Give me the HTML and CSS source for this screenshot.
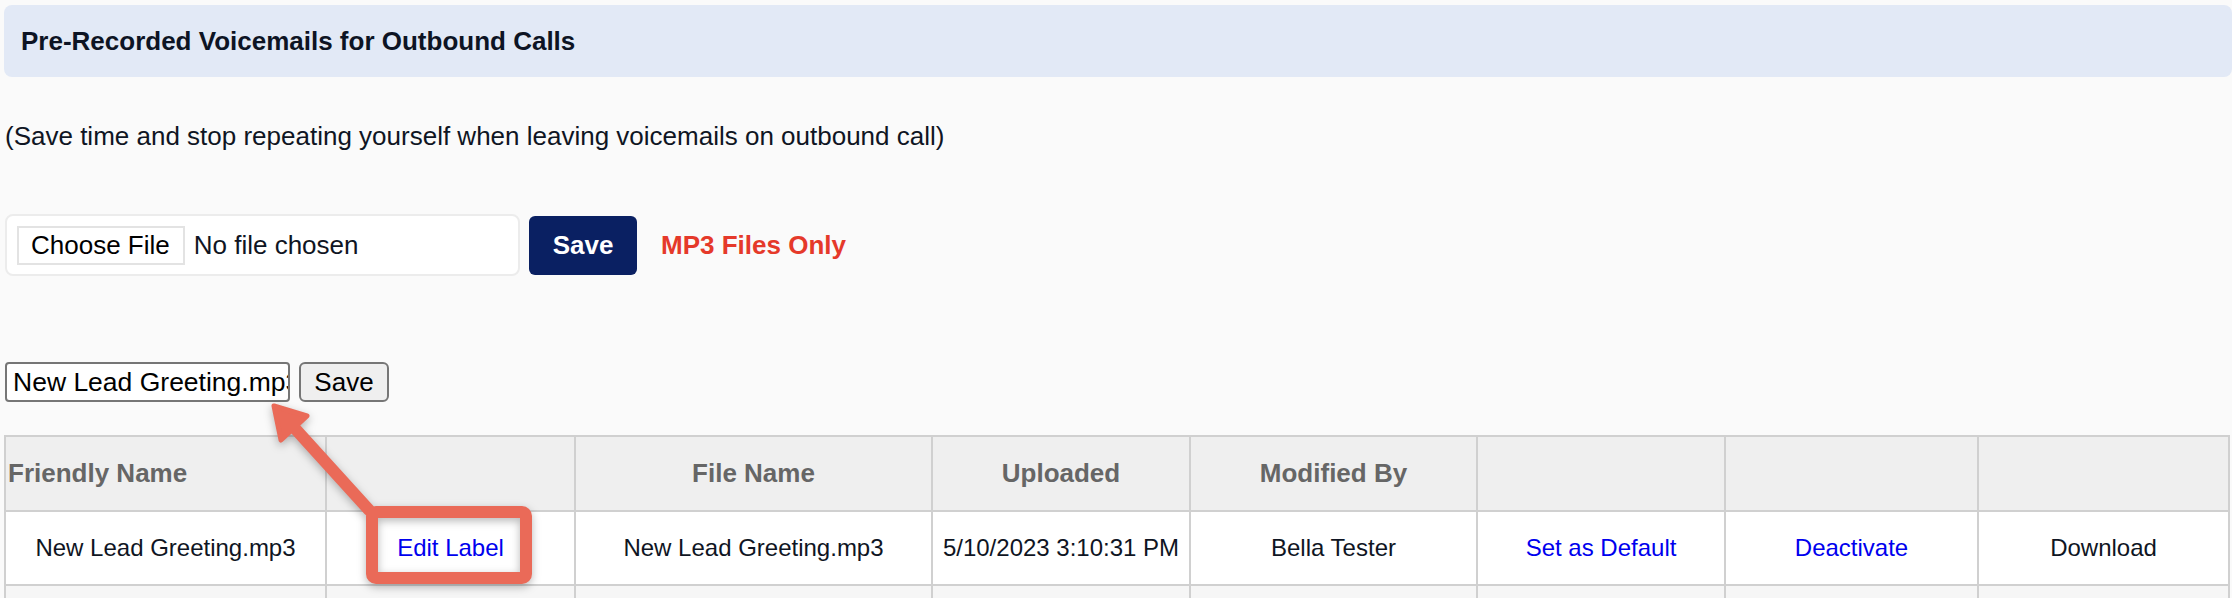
FILE: index.html
```html
<!DOCTYPE html>
<html lang="en">
<head>
<meta charset="utf-8">
<title>Pre-Recorded Voicemails</title>
<link rel="stylesheet" href="styles.css">
</head>
<body>
<div class="page">
  <div class="band">
    <h1 class="band-title">Pre-Recorded Voicemails for Outbound Calls</h1>
  </div>
  <p class="intro">(Save time and stop repeating yourself when leaving voicemails on outbound call)</p>

  <div class="upload-row">
    <label class="file-box">
      <span class="file-btn">Choose File</span>
      <span class="file-name">No file chosen</span>
    </label>
    <button class="btn-primary" type="button">Save</button>
    <span class="mp3-note">MP3 Files Only</span>
  </div>

  <div class="label-row">
    <input class="label-input" type="text" value="New Lead Greeting.mp3">
    <button class="btn-plain" type="button">Save</button>
  </div>

  <table class="grid">
    <colgroup>
      <col class="w1"><col class="w2"><col class="w3"><col class="w4">
      <col class="w5"><col class="w6"><col class="w7"><col class="w8">
    </colgroup>
    <thead>
      <tr class="head-row">
        <th class="th-left">Friendly Name</th>
        <th></th>
        <th>File Name</th>
        <th>Uploaded</th>
        <th>Modified By</th>
        <th></th>
        <th></th>
        <th></th>
      </tr>
    </thead>
    <tbody>
      <tr class="body-row">
        <td>New Lead Greeting.mp3</td>
        <td><a class="link" href="#">Edit Label</a></td>
        <td>New Lead Greeting.mp3</td>
        <td>5/10/2023 3:10:31 PM</td>
        <td>Bella Tester</td>
        <td><a class="link" href="#">Set as Default</a></td>
        <td><a class="link" href="#">Deactivate</a></td>
        <td>Download</td>
      </tr>
      <tr class="body-row stripe">
        <td>&nbsp;</td><td></td><td></td><td></td><td></td><td></td><td></td><td></td>
      </tr>
    </tbody>
  </table>
</div>

<svg class="annot" width="2232" height="598" viewBox="0 0 2232 598" aria-hidden="true">
  <g class="annot-shadow">
    <line x1="369" y1="510" x2="290" y2="423" stroke="#ea6a58" stroke-width="12" stroke-linecap="round"/>
    <polygon points="274,406 307,416 281,440" fill="#ea6a58" stroke="#ea6a58" stroke-width="5" stroke-linejoin="round"/>
    <rect x="372" y="512" width="154" height="66" rx="4" ry="4" fill="none" stroke="#ea6a58" stroke-width="12"/>
  </g>
</svg>
</body>
</html>
```

FILE: styles.css
```css
html, body {
  margin: 0;
  padding: 0;
  height: 598px;
  overflow: hidden;
  background: #fafafa;
}

body {
  position: relative;
  font-family: "Liberation Sans", Arial, Helvetica, sans-serif;
  font-size: 26px;
  color: #0f1523;
}

.page {
  padding: 5px 0 0 4px;
}

.band {
  height: 72px;
  background: #e2e9f6;
  border-radius: 8px;
  display: flex;
  align-items: center;
  padding-left: 17px;
}

.band-title {
  margin: 0;
  font-size: 26px;
  font-weight: bold;
  color: #0d1424;
}

.intro {
  margin: 44px 0 0 1px;
  line-height: 30px;
  font-size: 26px;
  color: #0f1523;
}

.upload-row {
  margin-top: 63px;
  display: flex;
  align-items: center;
  padding-left: 1px;
}

.file-box {
  width: 515px;
  height: 62px;
  box-sizing: border-box;
  border: 2px solid #ececec;
  border-radius: 8px;
  background: #ffffff;
  display: flex;
  align-items: center;
  padding-left: 10px;
  gap: 9px;
}

.file-btn {
  display: inline-block;
  height: 39px;
  box-sizing: border-box;
  line-height: 35px;
  padding: 0 13px 0 12px;
  border: 2px solid #e3e3e3;
  background: #ffffff;
  color: #000000;
}

.file-name {
  color: #0f1523;
}

.btn-primary {
  margin-left: 9px;
  width: 108px;
  height: 59px;
  border: none;
  border-radius: 6px;
  background: #0a2062;
  color: #ffffff;
  font-family: inherit;
  font-size: 26px;
  font-weight: bold;
  padding: 0;
}

.mp3-note {
  margin-left: 24px;
  color: #e5392a;
  font-weight: bold;
}

.label-row {
  margin-top: 86px;
  display: flex;
  align-items: center;
  gap: 9px;
  padding-left: 1px;
}

.label-input {
  width: 285px;
  height: 40px;
  box-sizing: border-box;
  border: 2px solid #767676;
  border-radius: 4px;
  padding: 0 0 0 6px;
  font-family: inherit;
  font-size: 26.5px;
  color: #000000;
  background: #ffffff;
}

.btn-plain {
  width: 90px;
  height: 40px;
  box-sizing: border-box;
  border: 2px solid #767676;
  border-radius: 6px;
  background: #efefef;
  color: #000000;
  font-family: inherit;
  font-size: 26px;
  padding: 0;
}

.grid {
  margin-top: 33px;
  width: 2224px;
  table-layout: fixed;
  border-collapse: collapse;
  background: #ffffff;
}

.w1 { width: 321px; }
.w2 { width: 249px; }
.w3 { width: 357px; }
.w4 { width: 258px; }
.w5 { width: 287px; }
.w6 { width: 248px; }
.w7 { width: 253px; }
.w8 { width: 251px; }

.grid th,
.grid td {
  border: 2px solid #d0d0d0;
  text-align: center;
  padding: 0;
  white-space: nowrap;
}

.head-row th {
  height: 73px;
  background: #efefef;
  color: #666666;
  font-weight: bold;
  font-size: 26px;
}

.grid .th-left {
  text-align: left;
  padding-left: 2px;
}

.body-row td {
  height: 72px;
  color: #0f1523;
  font-size: 24px;
}

.stripe td {
  background: #f6f6f6;
}

.link {
  color: #0000ee;
  text-decoration: none;
}

.annot {
  position: absolute;
  left: 0;
  top: 0;
  pointer-events: none;
}

.annot-shadow {
  filter: drop-shadow(0 3px 4px rgba(0, 0, 0, 0.28));
}
```
